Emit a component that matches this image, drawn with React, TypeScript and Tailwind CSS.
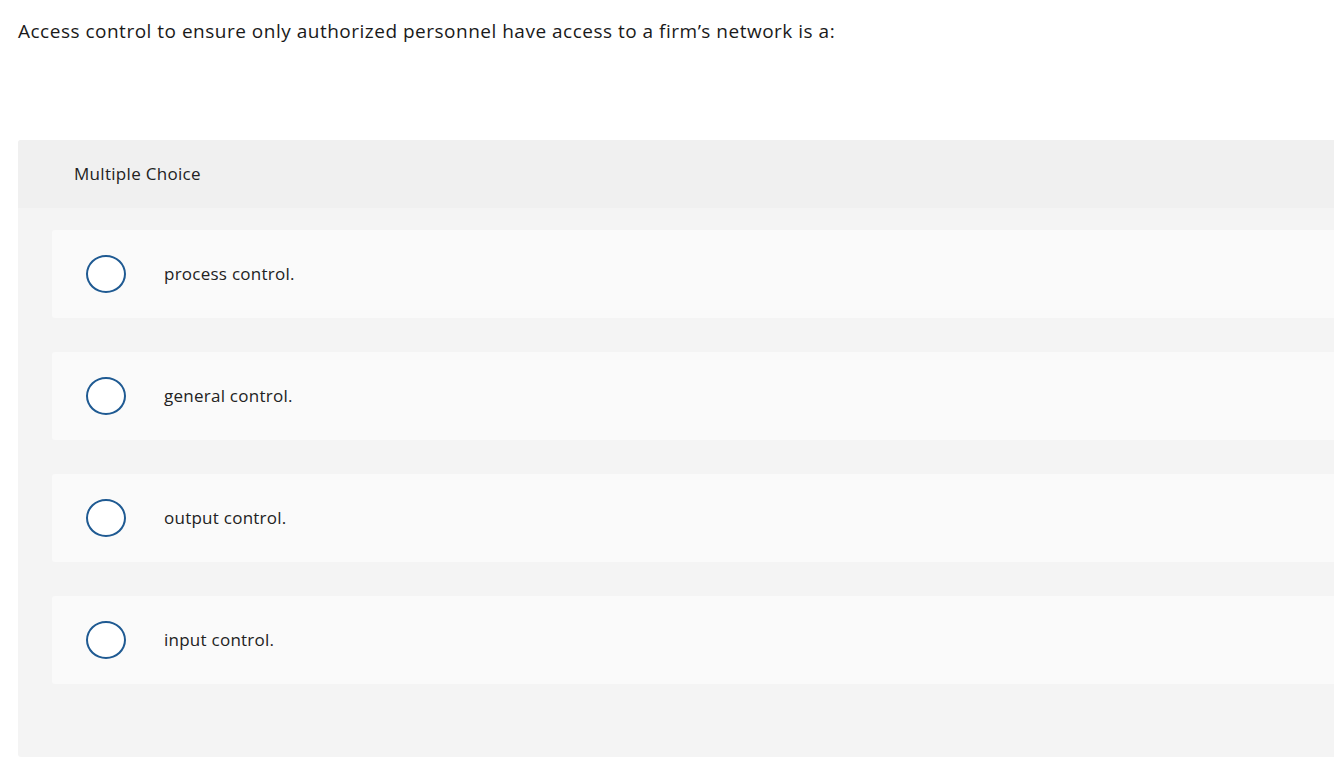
const options = ["process control.", "general control.", "output control.", "input control."]

function Radio() {
  return (
    <span className="block h-[38px] w-[40px] shrink-0 rounded-[50%] border-2 border-[#1f5a92] bg-white" />
  )
}

export default function App() {
  return (
    <div
      className="min-h-[780px] overflow-hidden bg-white text-[#222]"
      style={{ fontFamily: '"Open Sans", "Lato", sans-serif' }}
    >
      <p className="pl-[18px] pt-[18px] text-[19px] leading-[26px] tracking-[0.5px] text-[#1a1a1a]">
        Access control to ensure only authorized personnel have access to a firm’s network is a:
      </p>
      <div className="ml-[18px] mt-[96px] w-[1340px] rounded-[3px] bg-[#f4f4f4]">
        <div className="flex h-[68px] items-center rounded-t-[3px] bg-[#f0f0f0] pl-[56px] text-[17px] tracking-[0.3px] text-[#222]">
          Multiple Choice
        </div>
        <div className="flex flex-col gap-[34px] pb-[73px] pl-[34px] pt-[22px]">
          {options.map((o) => (
            <div
              key={o}
              className="flex h-[88px] items-center rounded-[3px] bg-[#fafafa] pl-[34px]"
            >
              <Radio />
              <span className="ml-[38px] text-[17px] tracking-[0.25px] text-[#222]">{o}</span>
            </div>
          ))}
        </div>
      </div>
    </div>
  )
}
